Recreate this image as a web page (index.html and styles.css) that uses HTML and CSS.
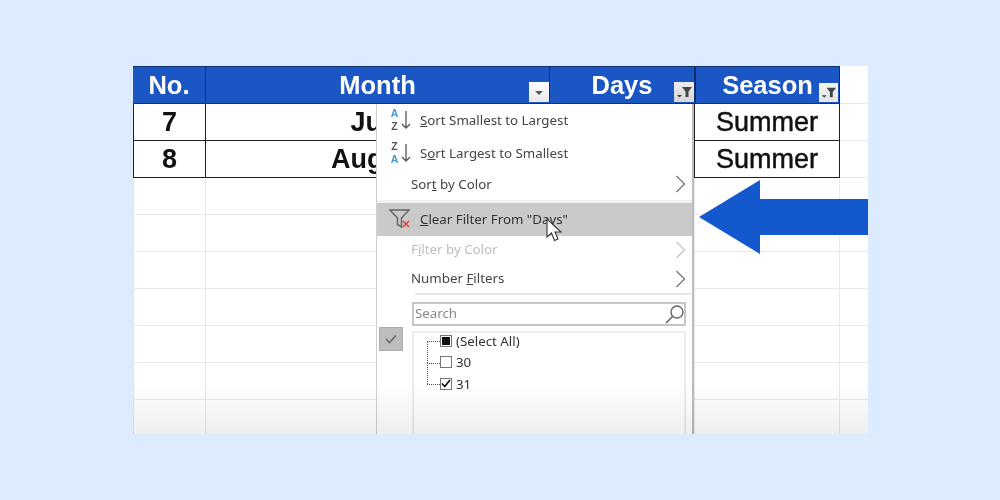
FILE: index.html
```html
<!DOCTYPE html>
<html lang="en">
<head>
<meta charset="utf-8">
<title>Excel filter menu</title>
<link rel="stylesheet" href="styles.css">
</head>
<body>
<main class="sheet">
  <div class="grid">
    <div class="cell head">No.</div>
    <div class="cell head">Month<span class="fbtn"><svg width="20" height="20" viewBox="0 0 20 20"><path d="M6 9h8l-4 4z" fill="#555"/></svg></span></div>
    <div class="cell head">Days<span class="fbtn fbtn-on"><svg width="20" height="20" viewBox="0 0 20 20"><path d="M8 5h10l-3.500 4.500V15h-3V9.500z" fill="#444"/><path d="M3 13h5l-2.500 2.500z" fill="#444"/></svg></span></div>
    <div class="cell head head-last">Season<span class="fbtn fbtn-season"><svg width="19" height="19" viewBox="0 0 20 20"><path d="M8 5h10l-3.500 4.500V15h-3V9.500z" fill="#444"/><path d="M3 13h5l-2.500 2.500z" fill="#444"/></svg></span></div>
    <div class="cell blank-top"></div>

    <div class="cell data strong">7</div><div class="cell data strong">July</div><div class="cell data strong">31</div><div class="cell data">Summer</div><div class="cell blank"></div>
    <div class="cell data strong">8</div><div class="cell data strong">August</div><div class="cell data strong">31</div><div class="cell data">Summer</div><div class="cell blank"></div>

    <div class="cell blank"></div><div class="cell blank"></div><div class="cell blank"></div><div class="cell blank"></div><div class="cell blank"></div>
    <div class="cell blank"></div><div class="cell blank"></div><div class="cell blank"></div><div class="cell blank"></div><div class="cell blank"></div>
    <div class="cell blank"></div><div class="cell blank"></div><div class="cell blank"></div><div class="cell blank"></div><div class="cell blank"></div>
    <div class="cell blank"></div><div class="cell blank"></div><div class="cell blank"></div><div class="cell blank"></div><div class="cell blank"></div>
    <div class="cell blank"></div><div class="cell blank"></div><div class="cell blank"></div><div class="cell blank"></div><div class="cell blank"></div>
    <div class="cell blank"></div><div class="cell blank"></div><div class="cell blank"></div><div class="cell blank"></div><div class="cell blank"></div>
    <div class="cell blank last"></div><div class="cell blank last"></div><div class="cell blank last"></div><div class="cell blank last"></div><div class="cell blank last"></div>
  </div>

  <section class="menu">
    <div class="item item-sort1">
      <span class="sort-icon"><span class="az"><b class="blue">A</b><b>Z</b></span><svg width="10" height="20" viewBox="0 0 10 20"><path d="M5 1v17M1 14l4 4 4-4" fill="none" stroke="#555" stroke-width="1.300"/></svg></span>
      <span class="label"><u>S</u>ort Smallest to Largest</span>
    </div>
    <div class="item item-sort2">
      <span class="sort-icon"><span class="az"><b>Z</b><b class="blue">A</b></span><svg width="10" height="20" viewBox="0 0 10 20"><path d="M5 1v17M1 14l4 4 4-4" fill="none" stroke="#555" stroke-width="1.300"/></svg></span>
      <span class="label">S<u>o</u>rt Largest to Smallest</span>
    </div>
    <div class="item item-color">
      <span class="label plain">Sor<u>t</u> by Color</span>
      <svg class="chev" width="11" height="18" viewBox="0 0 11 18"><path d="M1.500 1l8 8-8 8" fill="none" stroke="#777" stroke-width="1.300"/></svg>
    </div>
    <div class="item item-clear">
      <svg class="clear-icon" width="24" height="22" viewBox="0 0 24 22"><path d="M1 2h19l-7.500 8v9l-4-2.500V10z" fill="none" stroke="#666" stroke-width="1.500"/><path d="M14 13l6 6M20 13l-6 6" stroke="#e0453a" stroke-width="1.600"/></svg>
      <span class="label"><u>C</u>lear Filter From "Days"</span>
    </div>
    <div class="item item-filter disabled">
      <span class="label plain">F<u>i</u>lter by Color</span>
      <svg class="chev" width="11" height="18" viewBox="0 0 11 18"><path d="M1.500 1l8 8-8 8" fill="none" stroke="#c4c4c4" stroke-width="1.300"/></svg>
    </div>
    <div class="item item-number">
      <span class="label plain">Number <u>F</u>ilters</span>
      <svg class="chev" width="11" height="18" viewBox="0 0 11 18"><path d="M1.500 1l8 8-8 8" fill="none" stroke="#777" stroke-width="1.300"/></svg>
    </div>
    <div class="search">
      <span>Search</span>
      <svg class="glass" width="22" height="22" viewBox="0 0 22 22"><circle cx="13" cy="9" r="6" fill="none" stroke="#666" stroke-width="1.400"/><path d="M8.500 13.500L2 20" stroke="#666" stroke-width="1.600"/></svg>
    </div>
    <div class="lower">
      <div class="tick-btn"><svg width="12" height="10" viewBox="0 0 12 10"><path d="M1 5l3.500 3.500L11 1.500" fill="none" stroke="#6b6b6b" stroke-width="1.600"/></svg></div>
      <div class="tree">
        <div class="tree-row"><span class="box"><i class="mixed"></i></span>(Select All)</div>
        <div class="tree-row"><span class="box"></span>30</div>
        <div class="tree-row"><span class="box"><svg width="10" height="9" viewBox="0 0 10 9"><path d="M1 4.500l2.800 3L9 1" fill="none" stroke="#111" stroke-width="1.700"/></svg></span>31</div>
      </div>
    </div>
  </section>

  <svg class="arrow" width="170" height="74" viewBox="0 0 170 74"><path d="M0 37L61 0v19h109v36H61v19z" fill="#1358cd"/></svg>
  <svg class="cursor" width="17" height="25" viewBox="0 0 17 25"><path d="M1 1v18l4.500-4 3 7.500 3.500-1.500-3-7h6z" fill="#fff" stroke="#333" stroke-width="1.100"/></svg>
</main>
</body>
</html>
```
FILE: styles.css
```css
* { box-sizing: border-box; }
html, body { margin: 0; height: 100%; }
body {
  width: 1000px;
  height: 500px;
  background: #dcebfd;
  padding: 66px 132px 66px 133px;
  overflow: hidden;
  font-family: "Liberation Sans", Arial, sans-serif;
}
.sheet {
  position: relative;
  width: 735px;
  height: 368px;
  background: #fff;
  overflow: hidden;
  filter: blur(0.55px);
}
.sheet::after {
  content: "";
  position: absolute;
  left: 0;
  right: 0;
  bottom: 0;
  height: 50px;
  background: linear-gradient(rgba(0,0,0,0), rgba(0,0,0,.065));
}
.grid {
  display: grid;
  grid-template-columns: 73px 344px 145px 145px 28px;
  grid-template-rows: 38px repeat(8, 37px) 34px;
}
.cell {
  position: relative;
  display: flex;
  align-items: center;
  justify-content: center;
  color: #111;
  font-size: 27px;
}
.head {
  background: #1a56c4;
  color: #fff;
  font-weight: 700;
  font-size: 25.500px;
  border-top: 1px solid #12306e;
  border-right: 1px solid #12306e;
  border-bottom: 1px solid #12306e;
}
.head-last { border-right: 1px solid #1c2a4c; border-left: 1px solid #1c2a4c; }
.blank-top { border-bottom: 1.500px solid #e8e8e8; }
.data {
  border-right: 1.500px solid #222;
  border-bottom: 1.500px solid #222;
  -webkit-text-stroke: .5px #111;
}
.data:nth-child(5n+1) { border-left: 1.500px solid #222; }
.strong { font-weight: 700; -webkit-text-stroke: 0; }
.blank {
  border-right: 1.500px solid #e8e8e8;
  border-bottom: 1.500px solid #e8e8e8;
}
.blank:nth-child(5n+1) { border-left: 1.500px solid #e4e4e4; }
.blank:nth-child(5n) { border-right: 0; }
.blank.last { border-bottom: 0; }
.fbtn {
  position: absolute;
  right: 0;
  bottom: 1px;
  width: 20px;
  height: 20px;
  background: linear-gradient(#fff, #e9e9e9);
  display: flex;
}
.fbtn-on { background: linear-gradient(#ececec, #d6d6d6); }
.fbtn-season { width: 19px; height: 19px; right: 1px; background: linear-gradient(#f4f4f4, #e4e4e4); }

.menu {
  position: absolute;
  left: 243px;
  top: 38px;
  width: 318px;
  height: 330px;
  background: #fff;
  border-left: 1px solid #cfcfcf;
  border-right: 2px solid #bdbdbd;
  font-family: "Noto Sans", "Open Sans", sans-serif;
  font-size: 13.300px;
  color: #444;
  display: flex;
  flex-direction: column;
}
.item { display: flex; align-items: center; position: relative; flex: none; }
.item-sort1, .item-sort2 { height: 33px; padding-bottom: 2px; }
.item-color { height: 28px; margin-bottom: 5px; }
.item-clear { height: 33px; padding-bottom: 2px; background: #cbcaca; color: #333; box-shadow: 0 -3px 0 #f0f0f0; }
.item-filter { height: 27px; padding-bottom: 2px; }
.item-number { height: 32px; padding-bottom: 3px; }
.item-number::after {
  content: "";
  position: absolute;
  left: 38px;
  right: 0;
  bottom: 0;
  border-bottom: 2px solid #e6e6e6;
}
.disabled { color: #bdbdbd; }
.sort-icon {
  width: 43px;
  padding-left: 12px;
  display: flex;
  align-items: center;
  gap: 1px;
}
.az {
  display: flex;
  flex-direction: column;
  font-family: "Liberation Sans", sans-serif;
  font-size: 10.500px;
  line-height: 12.200px;
  color: #555;
  width: 11px;
  text-align: center;
}
.az b { display: block; }
.az .blue { color: #3f9ad6; }
.label.plain { margin-left: 34px; }
.chev { position: absolute; right: 6px; top: 50%; margin-top: -9px; }
.clear-icon { margin: 0 7px 0 12px; }
.search {
  flex: none;
  margin: 7px 6px 0 35px;
  height: 24px;
  border: 2px solid #c6c6c6;
  display: flex;
  align-items: center;
  justify-content: space-between;
  padding: 0 0 2px 1px;
  color: #8a8a8a;
}
.glass { margin-right: -2px; margin-top: 2px; }
.lower { display: flex; flex: 1; margin-top: 5px; }
.tick-btn {
  width: 24px;
  height: 24px;
  margin: -4px 9px 0 2px;
  background: #bdbdbd;
  border: 1px solid #adadad;
  display: flex;
  align-items: center;
  justify-content: center;
}
.tree {
  flex: 1;
  margin-right: 6px;
  border: 2px solid #ececec;
  border-bottom: 0;
  color: #333;
  padding-left: 12px;
}
.tree-row { height: 21.500px; display: flex; align-items: center; gap: 4px; padding-left: 14px; position: relative; }
.tree-row:first-child { margin-top: -3px; }
.tree-row::before {
  content: "";
  position: absolute;
  left: 1px;
  top: 11px;
  width: 13px;
  border-top: 1px dotted #555;
}
.tree-row + .tree-row::after {
  content: "";
  position: absolute;
  left: 1px;
  top: -11px;
  height: 22px;
  border-left: 1px dotted #555;
}
.box {
  width: 12px;
  height: 12px;
  border: 1px solid #777;
  background: #fff;
  display: flex;
  align-items: center;
  justify-content: center;
  flex: none;
}
.mixed { width: 8px; height: 8px; background: #111; display: block; }
.arrow { position: absolute; left: 566px; top: 114px; }
.cursor { position: absolute; left: 413px; top: 152px; }
```
